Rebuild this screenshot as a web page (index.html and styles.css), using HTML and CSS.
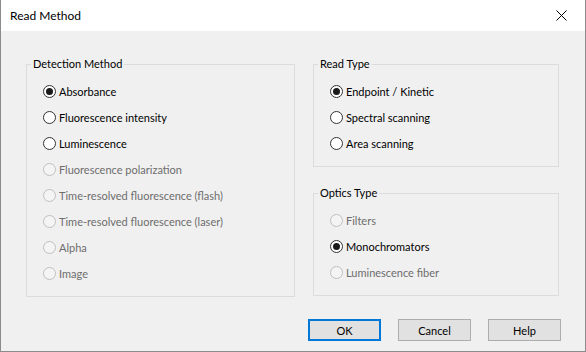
FILE: index.html
```html
<!doctype html>
<html lang="en">
<head>
  <meta charset="utf-8">
  <title>Read Method</title>
  <link rel="stylesheet" href="styles.css">
</head>
<body>
  <div class="dialog">
    <div class="titlebar">
      <span class="title">Read Method</span>
      <span class="close">
        <svg width="11" height="11" viewBox="0 0 11 11"><path d="M0.5 0.5L10.5 10.5M10.5 0.5L0.5 10.5" stroke="#000" stroke-width="1" fill="none"/></svg>
      </span>
    </div>
    <div class="dialog-body">
      <div class="groups">
        <fieldset class="group group-detection">
          <legend>Detection Method</legend>
          <label class="option"><input type="radio" name="detection" checked> Absorbance</label>
          <label class="option"><input type="radio" name="detection"> Fluorescence intensity</label>
          <label class="option"><input type="radio" name="detection"> Luminescence</label>
          <label class="option disabled"><input type="radio" name="detection" disabled> Fluorescence polarization</label>
          <label class="option disabled"><input type="radio" name="detection" disabled> Time-resolved fluorescence (flash)</label>
          <label class="option disabled"><input type="radio" name="detection" disabled> Time-resolved fluorescence (laser)</label>
          <label class="option disabled"><input type="radio" name="detection" disabled> Alpha</label>
          <label class="option disabled"><input type="radio" name="detection" disabled> Image</label>
        </fieldset>
        <div class="side">
          <fieldset class="group group-read">
            <legend>Read Type</legend>
            <label class="option"><input type="radio" name="readtype" checked> Endpoint / Kinetic</label>
            <label class="option"><input type="radio" name="readtype"> Spectral scanning</label>
            <label class="option"><input type="radio" name="readtype"> Area scanning</label>
          </fieldset>
          <fieldset class="group group-optics">
            <legend>Optics Type</legend>
            <label class="option disabled"><input type="radio" name="optics" disabled> Filters</label>
            <label class="option"><input type="radio" name="optics" checked> Monochromators</label>
            <label class="option disabled"><input type="radio" name="optics" disabled> Luminescence fiber</label>
          </fieldset>
        </div>
      </div>
      <div class="buttons">
        <button class="btn btn-default">OK</button>
        <button class="btn">Cancel</button>
        <button class="btn">Help</button>
      </div>
    </div>
  </div>
</body>
</html>
```

FILE: styles.css
```css
body {
  margin: 0;
  background: #f0f0f0;
  font-family: 'Lato', 'Noto Sans', sans-serif;
  font-size: 11px;
  color: #000;
}
.dialog {
  width: 586px;
  height: 352px;
  box-sizing: border-box;
  border: 1px solid #8c8c8c;
  border-top: none;
  background: #f0f0f0;
  display: flex;
  flex-direction: column;
}
.titlebar {
  height: 31px;
  background: #fff;
  display: flex;
  align-items: center;
  justify-content: space-between;
  padding-left: 9px;
  padding-right: 18px;
}
.title {
  font-size: 12px;
}
.close {
  display: flex;
}
.dialog-body {
  flex: 1;
  padding: 26px 24px 0 25px;
}
.groups {
  display: flex;
  gap: 18px;
}
.group {
  margin: 0;
  border: 1px solid #dcdcdc;
  padding: 7px 0 9px 16px;
  display: flex;
  flex-direction: column;
  box-sizing: border-box;
}
.group legend {
  padding: 0 2px;
  margin-left: -12px;
  line-height: 14px;
}
.group-detection {
  width: 269px;
  height: 240px;
}
.side {
  display: flex;
  flex-direction: column;
  gap: 19px;
  width: 246px;
}
.group-read,
.group-optics {
  height: 110px;
}
.option {
  height: 26px;
  display: flex;
  align-items: center;
  gap: 3px;
}
.option input {
  -webkit-appearance: none;
  appearance: none;
  margin: 0;
  width: 13px;
  height: 13px;
  border: 1px solid #333;
  border-radius: 50%;
  background: #fff;
  box-sizing: border-box;
  display: grid;
  place-content: center;
}
.option input:checked::before {
  content: "";
  width: 7px;
  height: 7px;
  border-radius: 50%;
  background: #1a1a1a;
}
.option.disabled {
  color: #6d6d6d;
}
.option.disabled input {
  border-color: #bfbfbf;
  background: #f4f4f4;
}
.buttons {
  display: flex;
  justify-content: flex-end;
  gap: 17px;
  margin-top: 22px;
}
.btn {
  width: 73px;
  height: 22px;
  border: 1px solid #adadad;
  background: #e1e1e1;
  font-family: inherit;
  font-size: 11px;
  color: #000;
  padding: 0;
}
.btn-default {
  border: 2px solid #0078d7;
}
```
